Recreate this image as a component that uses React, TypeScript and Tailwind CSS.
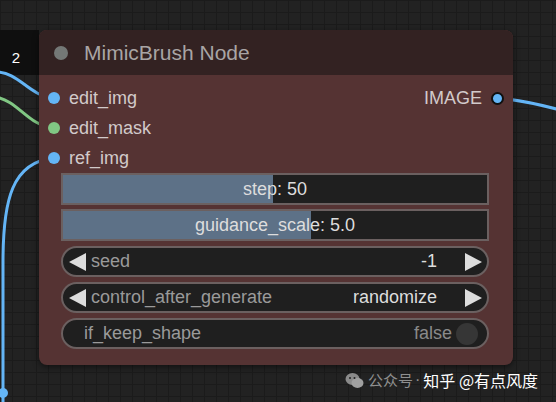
const font = "font-['Liberation_Sans',Arial,sans-serif]";

const inputs = [
	{ name: 'edit_img', color: 'bg-[#64b5f6]' },
	{ name: 'edit_mask', color: 'bg-[#81c784]' },
	{ name: 'ref_img', color: 'bg-[#64b5f6]' },
];

const Arrow = ({ dir }: { dir: 'left' | 'right' }) => (
	<svg width="17" height="18" viewBox="0 0 17 18" className="shrink-0">
		<path d={dir === 'left' ? 'M 17 0 L 0 9 L 17 18 Z' : 'M 0 0 L 17 9 L 0 18 Z'} fill="#dddddd" />
	</svg>
);

const Slider = ({ label, fill }: { label: string; fill: string }) => (
	<div className="relative h-[32px] w-full border-2 border-[#6b6060] bg-[#1f1f1f]">
		<div className={`absolute inset-y-0 left-0 bg-[#5d7187] ${fill}`} />
		<div className="relative flex h-full items-center justify-center text-[18px] text-[#dddddd]">
			{label}
		</div>
	</div>
);

const Combo = ({ label, value }: { label: string; value: string }) => (
	<div className="flex h-[31px] w-full items-center rounded-full border-2 border-[#6b6060] bg-[#1f1f1f] pl-[6px] pr-[5px] text-[18px]">
		<Arrow dir="left" />
		<span className="ml-[5px] text-[#9a9a9a]">{label}</span>
		<span className="ml-auto mr-[28px] text-[#dddddd]">{value}</span>
		<Arrow dir="right" />
	</div>
);

const Toggle = ({ label, value }: { label: string; value: string }) => (
	<div className="flex h-[31px] w-full items-center rounded-full border-2 border-[#6b6060] bg-[#1f1f1f] pl-[21px] pr-[9px] text-[18px]">
		<span className="text-[#9a9a9a]">{label}</span>
		<span className="ml-auto mr-[4px] text-[#8a8a8a]">{value}</span>
		<span className="h-[22px] w-[22px] rounded-full bg-[#363636]" />
	</div>
);

const Wires = () => (
	<svg className="absolute inset-0" width="556" height="402" viewBox="0 0 556 402">
		<path d="M -5 72 C 20 72, 28 96, 54 98" stroke="#64b5f6" strokeWidth="3" fill="none" />
		<path d="M -5 97 C 18 100, 28 126, 54 128" stroke="#81c784" strokeWidth="3" fill="none" />
		<path d="M 54 158 C 12 162, 3 200, 3 262 L 3 410" stroke="#64b5f6" strokeWidth="3" fill="none" />
		<circle cx="3" cy="393" r="5" fill="#64b5f6" />
		<path d="M 498 98 C 520 100, 538 104, 560 110" stroke="#64b5f6" strokeWidth="3" fill="none" />
	</svg>
);

export default function App() {
	return (
		<div
			className={`relative h-[402px] w-[556px] overflow-hidden bg-[#222222] bg-[image:linear-gradient(#1b1b1b_1px,transparent_1px),linear-gradient(90deg,#1b1b1b_1px,transparent_1px)] bg-[size:12px_12px] ${font}`}
		>
			{/* node behind, only its badge shows */}
			<div className="absolute left-0 top-[30px] flex h-[45px] w-[39px] justify-center bg-[#0f0f0f] pr-[7px] pt-[20px] text-[15px] leading-none text-white">
				2
			</div>
			<Wires />

			<div className="absolute left-[39px] top-[30px] flex h-[335px] w-[474px] flex-col overflow-hidden rounded-[8px] bg-[#553333] shadow-[0_2px_6px_rgba(0,0,0,0.5)]">
				<div className="flex h-[45px] shrink-0 items-center bg-[#332222]">
					<span className="ml-[15px] h-[14px] w-[14px] rounded-full bg-[#747876]" />
					<span className="ml-[16px] text-[21px] text-[#a9a5a5]">MimicBrush Node</span>
				</div>

				<div className="flex flex-col pt-[8px]">
					{inputs.map((inp, i) => (
						<div key={inp.name} className="flex h-[30px] items-center">
							<span className={`ml-[9px] h-[12px] w-[12px] rounded-full ${inp.color}`} />
							<span className="ml-[9px] text-[18px] text-[#d2caca]">{inp.name}</span>
							{i === 0 && (
								<>
									<span className="ml-auto text-[18px] text-[#d2caca]">IMAGE</span>
									<span className="ml-[9px] mr-[9px] h-[13px] w-[13px] rounded-full border-2 border-[#111] bg-[#64b5f6]" />
								</>
							)}
						</div>
					))}
				</div>

				<div className="ml-[22px] flex w-[428px] flex-col gap-[4px]">
					<Slider label="step: 50" fill="w-[210px]" />
					<Slider label="guidance_scale: 5.0" fill="w-[248px]" />
					<div className="flex flex-col gap-[5px] pt-[1px]">
						<Combo label="seed" value="-1" />
						<Combo label="control_after_generate" value="randomize" />
						<Toggle label="if_keep_shape" value="false" />
					</div>
				</div>
			</div>

			<div className="absolute left-[345px] top-[368px] flex items-center text-[16px] font-['Noto_Sans_CJK_SC',sans-serif]">
				<svg width="19" height="17" viewBox="0 0 19 17">
					<ellipse cx="7.5" cy="7" rx="7" ry="6" fill="#8a8a8a" />
					<ellipse cx="12.5" cy="11" rx="6" ry="5" fill="#a0a0a0" />
					<circle cx="5" cy="6" r="1" fill="#222" />
					<circle cx="9.5" cy="6" r="1" fill="#222" />
				</svg>
				<span className="ml-[4px] text-[15px] text-[#8f8f8f]">公众号</span>
				<span className="ml-[2px] font-['Liberation_Sans',sans-serif] text-[#8f8f8f]">·</span>
				<span className="ml-[3px] text-white">知乎 @有点风度</span>
			</div>
		</div>
	);
}
